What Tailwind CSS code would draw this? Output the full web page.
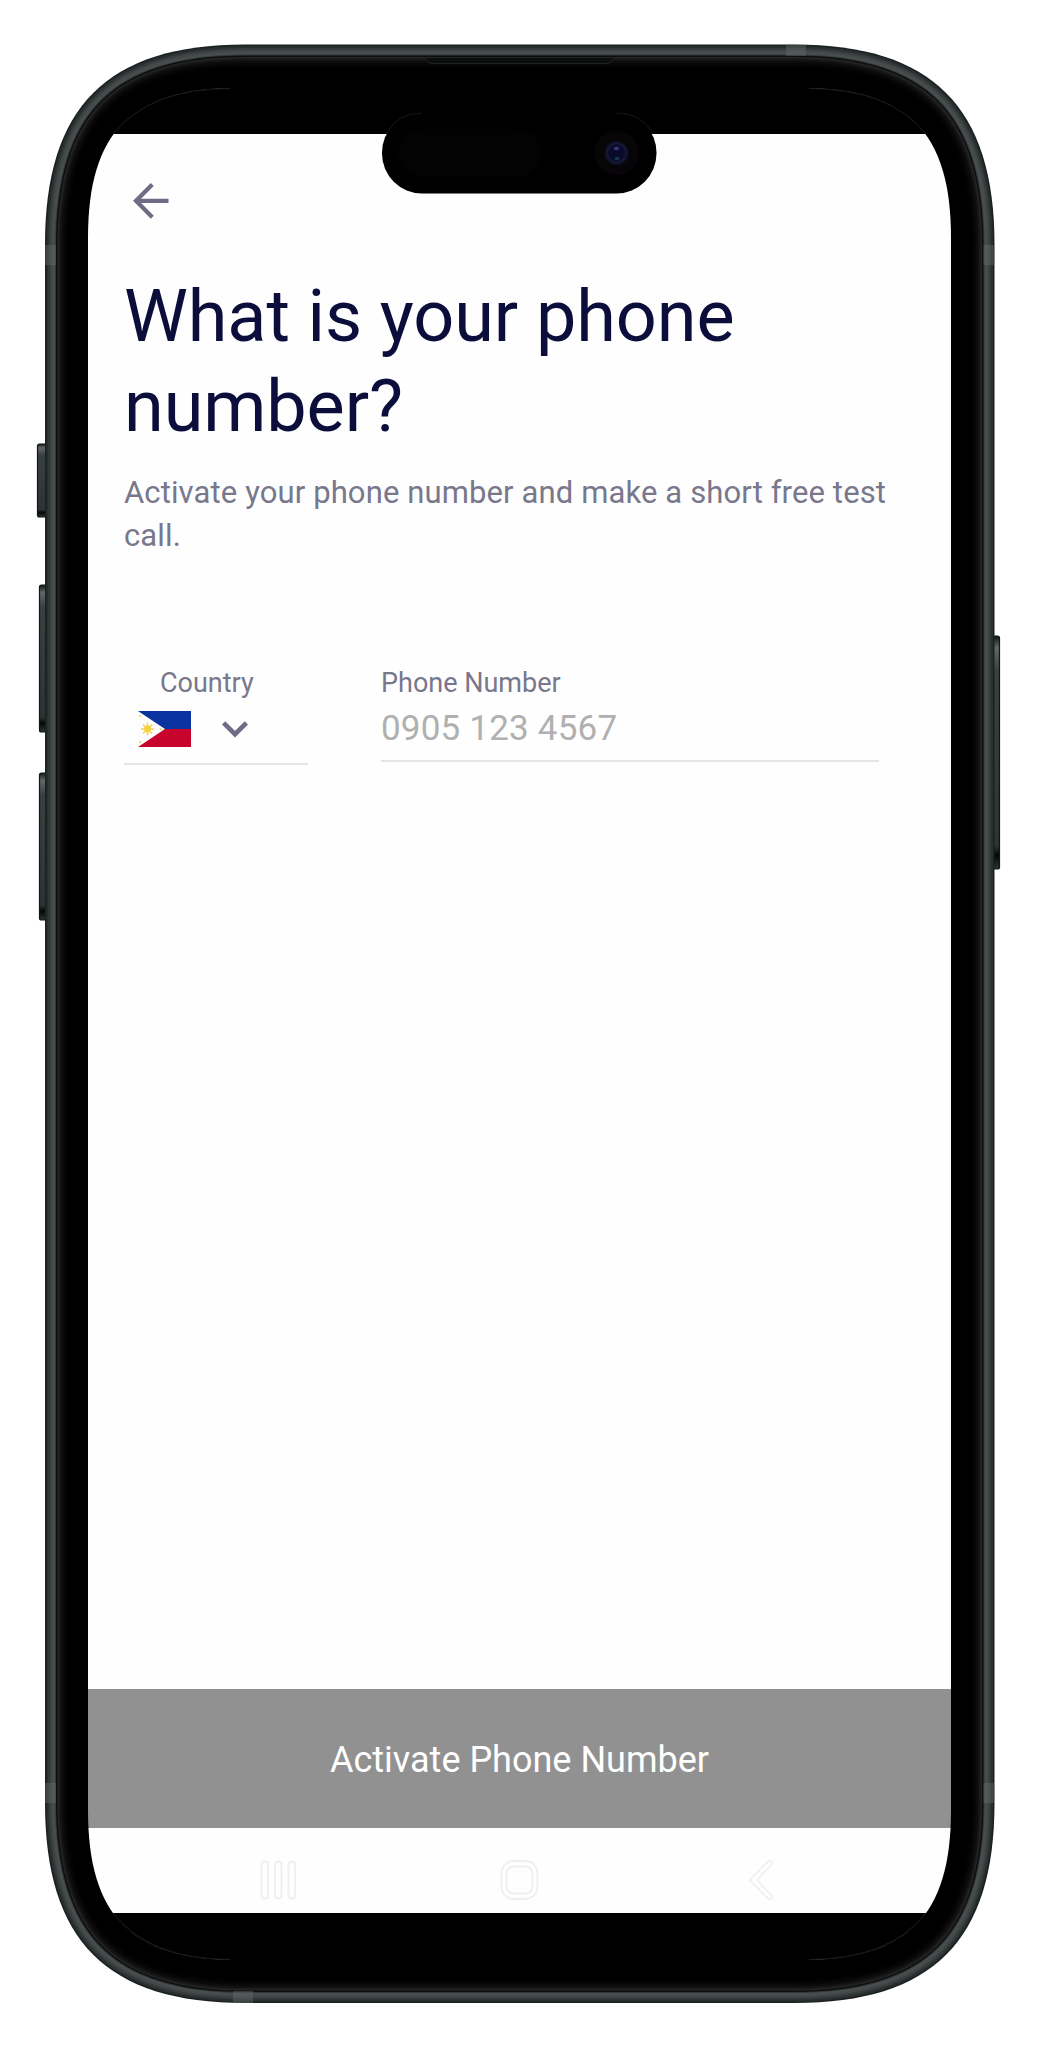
<!DOCTYPE html>
<html lang="en">
<head>
<meta charset="utf-8">
<title>Phone number</title>
<script src="https://cdn.jsdelivr.net/npm/@tailwindcss/browser@4"></script>
</head>
<body class="bg-white">
<div class="relative w-[1039px] h-[2048px] overflow-hidden bg-white pt-[134px] pl-[88px] font-['Roboto',sans-serif]">
  <main class="w-[863px] h-[1779px] bg-[#fefefe] flex flex-col">
    <header class="pt-[49px] pl-[45px]">
      <svg class="block w-9 h-9" viewBox="0 0 36 36" fill="none" stroke="#6f6d86" stroke-width="4.2"><path d="M35.5 17.8H3M19.3 1.5 3 17.8l16.3 16.4"/></svg>
    </header>
    <section class="mt-[53px] pl-9">
      <h1 class="text-[72px] leading-[90px] tracking-[-0.1px] text-[#0b0d3a] whitespace-nowrap">What is your phone<br>number?</h1>
      <p class="mt-[19px] text-[31px] leading-[43px] tracking-[0.12px] text-[#78778c] whitespace-nowrap">Activate your phone number and make a short free test<br>call.</p>
    </section>
    <form class="mt-[108px] pl-9 flex items-start gap-[73px]">
      <div class="w-[184px] h-[100px] border-b-2 border-[#e6e6e8] flex flex-col">
        <label class="pl-9 text-[27px] leading-9 text-[#78778c]">Country</label>
        <div class="mt-[10px] pl-[14px] flex items-center gap-[31px]">
          <svg class="w-[53px] h-9" viewBox="0 0 53 36">
            <path fill="#0a33a0" d="M0 0h53v18H0z"/><path fill="#c8032c" d="M0 18h53v18H0z"/><path fill="#fdfdfd" d="M0 0 27 18 0 36z"/>
            <g stroke="#f3d04a" stroke-width="1.4"><path d="M9.500 11.500v13M3 18h13M5 13.500l9 9M14 13.500l-9 9"/></g>
            <circle cx="9.500" cy="18" r="3.400" fill="#f5d33f"/>
            <g fill="#f3dc86"><circle cx="2.300" cy="5" r="1.200"/><circle cx="2.300" cy="31" r="1.200"/><circle cx="22.500" cy="18" r="1.200"/></g>
          </svg>
          <svg class="w-[26px] h-[17px]" viewBox="0 0 26 17" fill="none" stroke="#6f6d86" stroke-width="4.600"><path d="M1.600 1.800 13 13.200 24.400 1.800"/></svg>
        </div>
      </div>
      <div class="w-[498px] h-[97px] border-b-2 border-[#e6e6e8] flex flex-col">
        <label class="text-[27px] leading-9 text-[#78778c]">Phone Number</label>
        <span class="mt-[6px] text-[35px] leading-[44px] tracking-[0.2px] text-[#b0b0b0]">0905 123 4567</span>
      </div>
    </form>
    <button class="mt-auto h-[139px] bg-[#919191] text-white text-[36px] leading-[44px] pt-[3px]" type="button">Activate Phone Number</button>
    <nav class="h-[85px] flex items-start pt-[32px] pl-[172px]" aria-label="System">
      <svg class="w-[38px] h-10" viewBox="0 0 38 40" fill="none" stroke="#efefef" stroke-width="1.800"><rect x="1.500" y="1.500" width="6.500" height="37" rx="3"/><rect x="15" y="1.500" width="6.500" height="37" rx="3"/><rect x="28.500" y="1.500" width="6.500" height="37" rx="3"/></svg>
      <svg class="ml-[202px] w-10 h-10" viewBox="0 0 40 40" fill="none" stroke="#efefef" stroke-width="1.800"><rect x="1.500" y="1" width="36" height="38" rx="12"/><rect x="6.500" y="6.500" width="26" height="27" rx="7"/></svg>
      <svg class="ml-[208px] w-7 h-10" viewBox="0 0 28 40" fill="none" stroke="#efefef" stroke-width="1.600"><path d="M1.500 20 20.500 1q4-1 3.500 3L9 20l15 16q.5 4-3.500 3z"/></svg>
    </nav>
  </main>
  <svg class="absolute inset-0 w-[1039px] h-[2048px]" viewBox="0 0 1039 2048">
    <defs>
      <path id="body" d="M45 244.500C45 107 107 44.500 245 44.500H794.500C932 44.500 994.500 107 994.500 244.500V1803C994.500 1941 932 2003 794.500 2003H245C107 2003 45 1941 45 1803Z"/>
      <path id="glass" d="M88 238C88 131.500 131.500 88 238 88H801C907.500 88 951 131.500 951 238V1810C951 1916.500 907.500 1960 801 1960H238C131.500 1960 88 1916.500 88 1810Z"/>
      <mask id="rim"><use href="#body" fill="#fff"/><use href="#glass" fill="#000"/></mask>
      <clipPath id="shell"><use href="#body"/></clipPath>
      <linearGradient id="key" x1="0" x2="0" y1="0" y2="1"><stop offset="0" stop-color="#111616"/><stop offset=".05" stop-color="#626869"/><stop offset=".15" stop-color="#394041"/><stop offset=".9" stop-color="#2d3334"/><stop offset=".94" stop-color="#050606"/><stop offset="1" stop-color="#303536"/></linearGradient>
      <radialGradient id="lens"><stop offset="0" stop-color="#080a2c"/><stop offset=".6" stop-color="#090a2b"/><stop offset=".8" stop-color="#161838"/><stop offset="1" stop-color="#0b0b1a"/></radialGradient>
    </defs>
    <g fill="url(#key)" stroke="#111515" stroke-width="1.200">
      <rect x="37.500" y="444" width="10" height="73" rx="2"/><rect x="39.500" y="585" width="8" height="147" rx="2"/><rect x="39.500" y="773" width="8" height="147" rx="2"/><rect x="992" y="636" width="7.500" height="233" rx="2"/>
    </g>
    <g mask="url(#rim)">
      <use href="#body" fill="#000"/>
      <g fill="none">
        <use href="#body" stroke="#030303" stroke-width="46"/><use href="#body" stroke="#070707" stroke-width="41"/><use href="#body" stroke="#0c0c0c" stroke-width="37"/><use href="#body" stroke="#131313" stroke-width="33"/><use href="#body" stroke="#1c1c1c" stroke-width="30"/><use href="#body" stroke="#262727" stroke-width="27"/><use href="#body" stroke="#0d0e0e" stroke-width="25"/><use href="#body" stroke="#333839" stroke-width="22"/><use href="#body" stroke="#484d4e" stroke-width="20"/><use href="#body" stroke="#424748" stroke-width="15"/><use href="#body" stroke="#363b3c" stroke-width="11"/><use href="#body" stroke="#292e2f" stroke-width="7"/><use href="#body" stroke="#1b2020" stroke-width="3"/>
      </g>
    </g>
    <g clip-path="url(#shell)"><path fill="#666d6c" fill-opacity=".42" d="M45 245h11v20H45zM983.500 245h11v20h-11zM45 1783h11v20H45zM983.500 1783h11v20h-11zM786 44h20v12h-20zM233 1991h20v12h-20z"/></g>
    <path fill="#000" d="M112 134Q146 88.500 230 88H809Q893 88.500 927 134ZM112 1913Q146 1959.500 230 1960H809Q893 1959.500 927 1913Z"/>
    <g fill="none" stroke="#242424" stroke-width=".8"><path d="M113 134Q150 88.500 230 88.500M926 134Q889 88.500 809 88.500M113 1913Q150 1959.500 230 1959.500M926 1913Q889 1959.500 809 1959.500"/></g>
    <path fill="#0d0f0f" stroke="#262828" stroke-width=".8" d="M425 57.500q2 6 6 6H608q4 0 6-6z"/>
    <rect x="382" y="112.500" width="274.500" height="81" rx="40" fill="#000"/>
    <path d="M386 134Q397 113 422 113M653 134Q642 113 617 113" fill="none" stroke="#1d1d1d" stroke-width=".8"/>
    <rect x="398.500" y="129" width="142" height="48" rx="24" fill="#030303"/>
    <circle cx="616.500" cy="153" r="22" fill="#080509"/><circle cx="616.500" cy="153" r="12" fill="url(#lens)"/>
    <ellipse cx="616.500" cy="148.500" rx="2.600" ry="1.700" fill="#373a78"/><ellipse cx="617" cy="158.500" rx="2.600" ry="1.700" fill="#103a4e"/>
  </svg>
</div>
</body>
</html>
